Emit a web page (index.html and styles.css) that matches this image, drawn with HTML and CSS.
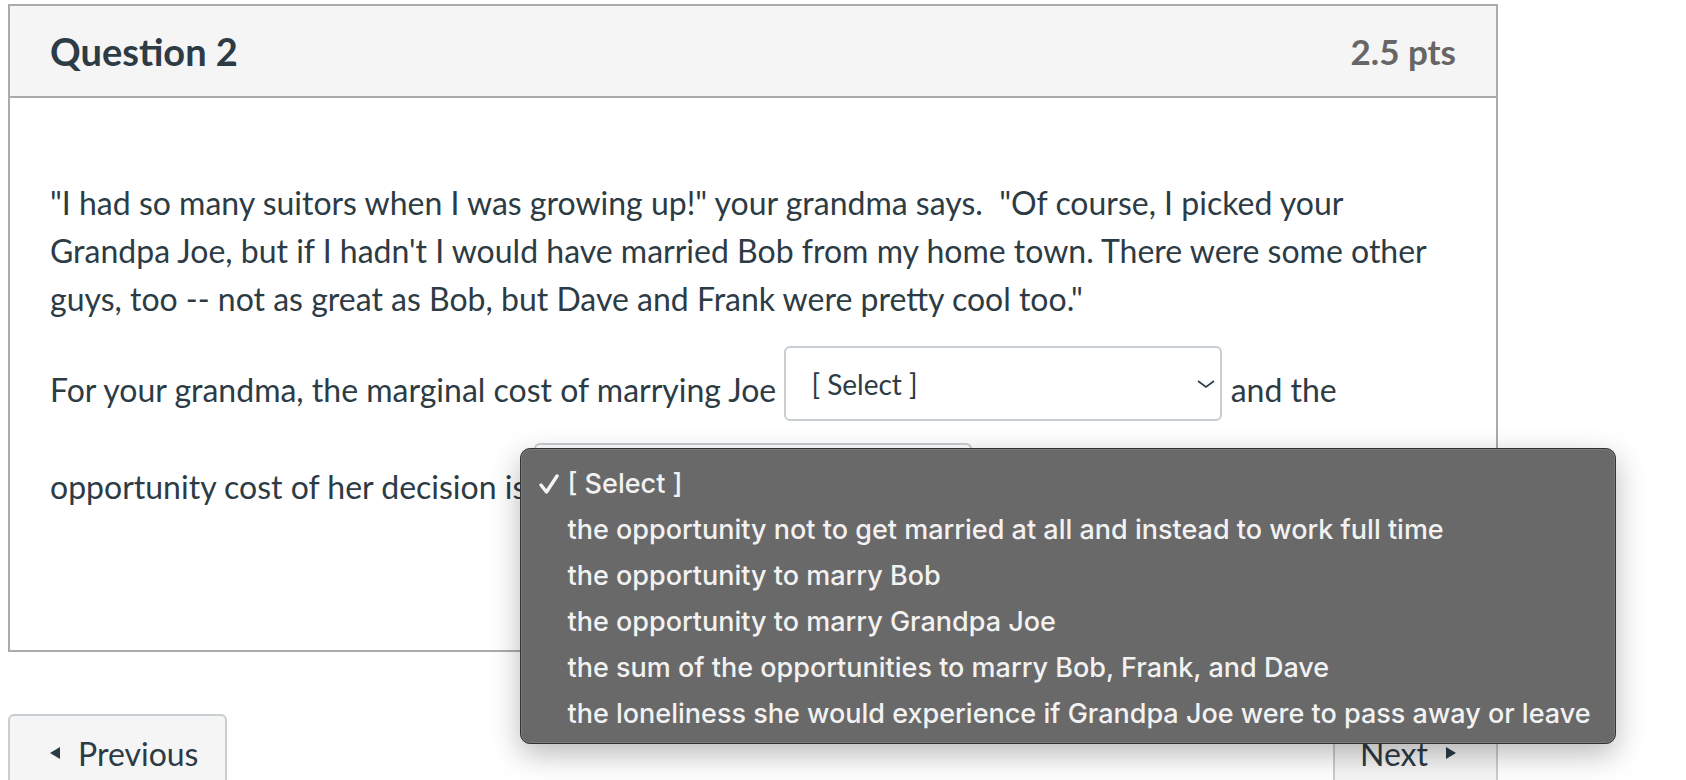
FILE: index.html
```html
<!DOCTYPE html>
<html lang="en">
<head>
    <meta charset="UTF-8">
    <meta name="viewport" content="width=device-width, initial-scale=1.0">
    <title>Question 2</title>
    <link rel="stylesheet" href="styles.css">
</head>
<body>
    <div class="quiz">
        <div class="question">
            <div class="question-header">
                <h2 class="question-title">Question 2</h2>
                <span class="points">2.5 pts</span>
            </div>
            <div class="question-body">
                <p>"I had so many suitors when I was growing up!" your grandma says.&nbsp; "Of course, I picked your Grandpa Joe, but if I hadn't I would have married Bob from my home town. There were some other guys, too -- not as great as Bob, but Dave and Frank were pretty cool too."</p>
                <p class="blanks">For your grandma, the marginal cost of marrying Joe <span class="select"><span class="select-text">[ Select ]</span><svg class="chevron" viewBox="0 0 18 8" width="18" height="8"><path d="M1 1 L9 7 L17 1" fill="none" stroke="#2d3b45" stroke-width="1.6"/></svg></span> and the opportunity cost of her decision is <span class="select open"><span class="select-text">[ Select ]</span><svg class="chevron" viewBox="0 0 18 8" width="18" height="8"><path d="M1 1 L9 7 L17 1" fill="none" stroke="#2d3b45" stroke-width="1.6"/></svg>
                    <span class="menu">
                        <span class="menu-item checked"><svg class="check" viewBox="0 0 20 20" width="20" height="20"><path d="M2 11 L7.5 18 L18 2" fill="none" stroke="#f4f4f4" stroke-width="3.4" stroke-linecap="round" stroke-linejoin="round"/></svg>[ Select ]</span>
                        <span class="menu-item">the opportunity not to get married at all and instead to work full time</span>
                        <span class="menu-item">the opportunity to marry Bob</span>
                        <span class="menu-item">the opportunity to marry Grandpa Joe</span>
                        <span class="menu-item">the sum of the opportunities to marry Bob, Frank, and Dave</span>
                        <span class="menu-item">the loneliness she would experience if Grandpa Joe were to pass away or leave</span>
                    </span>
                </span></p>
            </div>
        </div>
        <div class="nav">
            <button class="nav-button prev"><svg class="arrow" viewBox="0 0 10 12" width="10" height="12"><path d="M10 0 L0 6 L10 12 Z" fill="#2d3b45"/></svg>Previous</button>
            <button class="nav-button next">Next<svg class="arrow" viewBox="0 0 10 12" width="10" height="12"><path d="M0 0 L10 6 L0 12 Z" fill="#2d3b45"/></svg></button>
        </div>
    </div>
</body>
</html>
```

FILE: styles.css
```css
html, body {
    margin: 0;
    overflow: hidden;
    background-color: #fff;
}
body {
    font-family: Lato, "Open Sans", sans-serif;
    color: #2d3b45;
}
.quiz {
    width: 1490px;
    padding: 4px 0 0 8px;
}
.question {
    border: 2px solid #ababab;
}
.question-header {
    display: flex;
    justify-content: space-between;
    align-items: center;
    height: 90px;
    padding: 0 40px;
    background-color: #f5f5f5;
    border-bottom: 2px solid #ababab;
}
.question-title {
    margin: 0;
    font-size: 38px;
    font-weight: 700;
}
.points {
    font-size: 35px;
    font-weight: 700;
    color: #666;
}
.question-body {
    padding: 81px 40px 122px;
    font-size: 32px;
    line-height: 48px;
}
.question-body p {
    margin: 0;
}
.question-body .blanks {
    margin-top: 11px;
}
.select {
    position: relative;
    display: inline-flex;
    align-items: center;
    justify-content: space-between;
    box-sizing: border-box;
    width: 438px;
    height: 75px;
    margin: 12px 0 10px;
    padding: 0 5px 0 25px;
    border: 2px solid #c7cdd1;
    border-radius: 6px;
    background-color: #fff;
    font-size: 28px;
    line-height: 36px;
    vertical-align: 7px;
}
.chevron {
    display: block;
}
.menu {
    position: absolute;
    left: -16px;
    top: 3px;
    display: flex;
    flex-direction: column;
    box-sizing: border-box;
    width: 1096px;
    height: 296px;
    padding: 12px 0 8px;
    background-color: #696969;
    border: 1px solid #333;
    border-radius: 10px;
    box-shadow: inset 0 0 0 1px rgba(255, 255, 255, 0.12), 0 10px 30px rgba(0, 0, 0, 0.28);
    font-family: Inter, Roboto, sans-serif;
    font-size: 27px;
    font-weight: 500;
    line-height: 46px;
    color: #f2f2f2;
    white-space: nowrap;
    z-index: 2;
}
.menu-item {
    position: relative;
    display: block;
    height: 46px;
    padding-left: 46px;
}
.check {
    position: absolute;
    left: 18px;
    top: 13px;
}
.nav {
    display: flex;
    justify-content: space-between;
    margin-top: 62px;
}
.nav-button {
    display: flex;
    align-items: center;
    gap: 18px;
    height: 78px;
    padding: 0 27px 0 40px;
    font-family: Lato, sans-serif;
    font-size: 32px;
    color: #2d3b45;
    background-color: #f5f5f5;
    border: 2px solid #c7cdd1;
    border-radius: 6px;
}
.nav-button.next {
    padding: 0 40px 0 25px;
}
.arrow {
    display: block;
}
```
